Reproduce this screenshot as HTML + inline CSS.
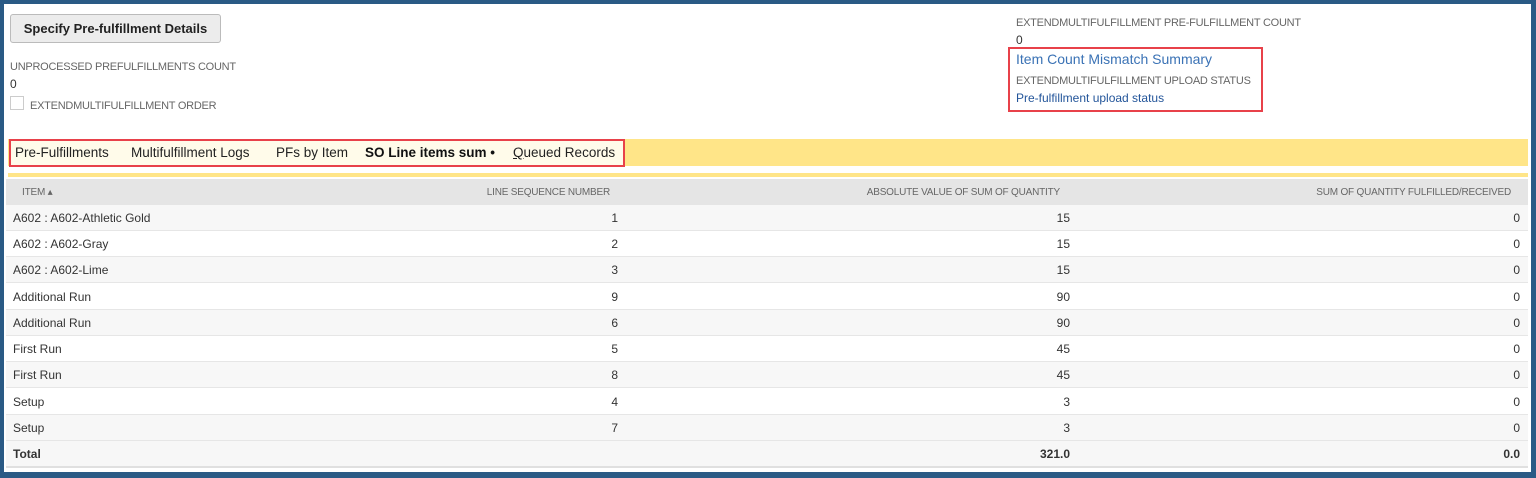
<!DOCTYPE html>
<html><head><style>
*{margin:0;padding:0;box-sizing:border-box}
body{width:1536px;height:478px;background:#2a5a85;font-family:"Liberation Sans",sans-serif;position:relative;overflow:hidden}
.in{position:absolute;left:4px;top:4px;width:1527px;height:468px;background:#fff}
.a{position:absolute;white-space:nowrap}
.lbl{font-size:11px;color:#666;letter-spacing:-0.25px}
.v{font-size:12px;color:#333}
.btn{left:10px;top:14px;width:211px;height:29px;border:1px solid #bbb;border-radius:3px;background:#ececec;font-weight:bold;font-size:13px;color:#222;text-align:center;line-height:28px}
.box{border:2px solid #e8414a}
.row{position:absolute;left:6px;width:1522px;height:26px;border-bottom:1px solid #e6e6e6;font-size:12px;color:#333}
.row span{position:absolute;top:6px}
.c1{left:7px}.c2{right:910px}.c3{right:458px}.c4{right:8px}
.hd{letter-spacing:-0.2px}
</style></head><body><div class="in"></div>
<div class="a btn">Specify Pre-fulfillment Details</div>
<div class="a lbl" style="left:10px;top:61px">UNPROCESSED PREFULFILLMENTS COUNT</div>
<div class="a v" style="left:10px;top:77px">0</div>
<div class="a" style="left:10px;top:96px;width:14px;height:14px;border:1px solid #ccc"></div>
<div class="a lbl" style="left:30px;top:100px">EXTENDMULTIFULFILLMENT ORDER</div>
<div class="a lbl" style="left:1016px;top:17px">EXTENDMULTIFULFILLMENT PRE-FULFILLMENT COUNT</div>
<div class="a v" style="left:1016px;top:33px">0</div>
<div class="a box" style="left:1008px;top:47px;width:255px;height:65px"></div>
<div class="a" style="left:1016px;top:51px;font-size:14px;color:#3a72b5">Item Count Mismatch Summary</div>
<div class="a lbl" style="left:1016px;top:75px">EXTENDMULTIFULFILLMENT UPLOAD STATUS</div>
<div class="a" style="left:1016px;top:91px;font-size:12px;color:#23559a">Pre-fulfillment upload status</div>
<div class="a" style="left:8px;top:139px;width:1520px;height:27px;background:#ffe588"></div>
<div class="a" style="left:8px;top:173px;width:1520px;height:4px;background:#ffe588"></div>
<div class="a box" style="left:9px;top:139px;width:616px;height:28px;background:#fffbea"></div>
<div class="a" style="left:15px;top:145px;font-size:13.5px;color:#222">Pre-Fulfillments</div>
<div class="a" style="left:131px;top:145px;font-size:13.5px;color:#222">Multifulfillment Logs</div>
<div class="a" style="left:276px;top:145px;font-size:13.5px;color:#222">PFs by Item</div>
<div class="a" style="left:365px;top:145px;font-size:13.5px;color:#111;font-weight:bold">SO Line items sum •</div>
<div class="a" style="left:513px;top:145px;font-size:13.5px;color:#222"><u>Q</u>ueued Records</div>
<div class="a hd" style="left:6px;top:179px;width:1522px;height:26px;background:#e5e5e5;font-size:10px;color:#666">
<span class="a" style="left:16px;top:8px">ITEM ▴</span><span class="a" style="right:918px;top:8px">LINE SEQUENCE NUMBER</span><span class="a" style="right:468px;top:8px">ABSOLUTE VALUE OF SUM OF QUANTITY</span><span class="a" style="right:17px;top:8px">SUM OF QUANTITY FULFILLED/RECEIVED</span></div>
<div class="row" style="top:205px;background:#f7f7f7"><span class="c1">A602 : A602-Athletic Gold</span><span class="c2">1</span><span class="c3">15</span><span class="c4">0</span></div>
<div class="row" style="top:231px"><span class="c1">A602 : A602-Gray</span><span class="c2">2</span><span class="c3">15</span><span class="c4">0</span></div>
<div class="row" style="top:257px;background:#f7f7f7"><span class="c1">A602 : A602-Lime</span><span class="c2">3</span><span class="c3">15</span><span class="c4">0</span></div>
<div class="row" style="top:284px"><span class="c1">Additional Run</span><span class="c2">9</span><span class="c3">90</span><span class="c4">0</span></div>
<div class="row" style="top:310px;background:#f7f7f7"><span class="c1">Additional Run</span><span class="c2">6</span><span class="c3">90</span><span class="c4">0</span></div>
<div class="row" style="top:336px"><span class="c1">First Run</span><span class="c2">5</span><span class="c3">45</span><span class="c4">0</span></div>
<div class="row" style="top:362px;background:#f7f7f7"><span class="c1">First Run</span><span class="c2">8</span><span class="c3">45</span><span class="c4">0</span></div>
<div class="row" style="top:389px"><span class="c1">Setup</span><span class="c2">4</span><span class="c3">3</span><span class="c4">0</span></div>
<div class="row" style="top:415px;background:#f7f7f7"><span class="c1">Setup</span><span class="c2">7</span><span class="c3">3</span><span class="c4">0</span></div>
<div class="row" style="top:441px;background:#f7f7f7;font-weight:bold;height:27px;border-bottom:2px solid #e0e0e0"><span class="c1">Total</span><span class="c3">321.0</span><span class="c4">0.0</span></div>
</body></html>
